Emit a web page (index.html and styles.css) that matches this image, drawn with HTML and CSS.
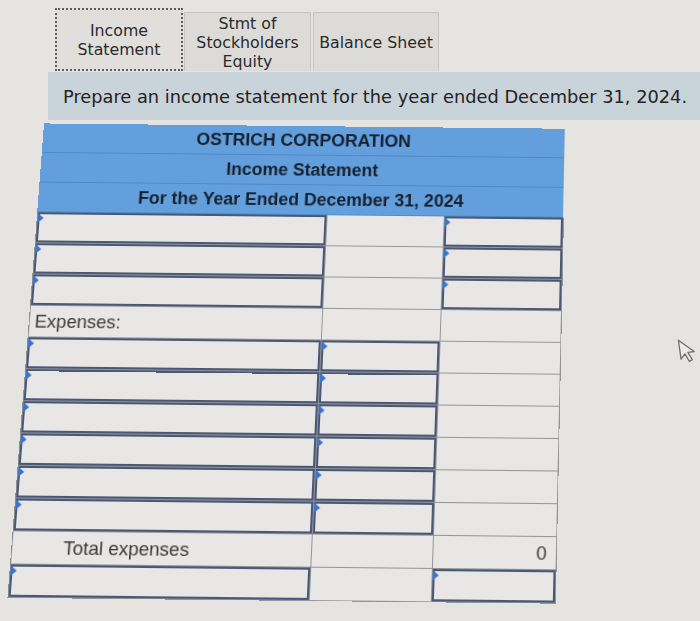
FILE: index.html
```html
<!DOCTYPE html>
<html>
<head>
<meta charset="utf-8">
<link rel="stylesheet" href="styles.css">
</head>
<body>
<div class="page">
  <div class="tabs">
    <div class="tab tab-active">Income<br>Statement</div>
    <div class="tab tab-mid">Stmt of<br>Stockholders<br>Equity</div>
    <div class="tab tab-last">Balance Sheet</div>
  </div>
  <div class="prompt">Prepare an income statement for the year ended December 31, 2024.</div>
  <div class="sheet">
    <div class="hdr">OSTRICH CORPORATION</div>
    <div class="hdr">Income Statement</div>
    <div class="hdr">For the Year Ended December 31, 2024</div>
    <div class="grid">
      <div class="c inp"></div><div class="c"></div><div class="c inp"></div>
      <div class="c inp"></div><div class="c"></div><div class="c inp"></div>
      <div class="c inp"></div><div class="c"></div><div class="c inp"></div>
      <div class="c lbl">Expenses:</div><div class="c"></div><div class="c"></div>
      <div class="c inp"></div><div class="c inp"></div><div class="c"></div>
      <div class="c inp"></div><div class="c inp"></div><div class="c"></div>
      <div class="c inp"></div><div class="c inp"></div><div class="c"></div>
      <div class="c inp"></div><div class="c inp"></div><div class="c"></div>
      <div class="c inp"></div><div class="c inp"></div><div class="c"></div>
      <div class="c inp"></div><div class="c inp"></div><div class="c"></div>
      <div class="c lbl lbl-indent">Total expenses</div><div class="c"></div><div class="c num">0</div>
      <div class="c inp"></div><div class="c"></div><div class="c inp"></div>
    </div>
  </div>
  <svg class="cursor" width="20" height="28" viewBox="0 0 20 28">
    <path d="M2 2 L2 21 L6.5 16.5 L10 24.5 L13 23.2 L9.6 15.4 L16 15.4 Z" fill="#ecebe9" stroke="#6f6f6f" stroke-width="1.3" stroke-linejoin="round"/>
  </svg>
</div>
</body>
</html>
```
FILE: styles.css
```css
html, body {
  margin: 0;
  padding: 0;
}
body {
  background: #e6e4e1;
  width: 700px;
  height: 621px;
  overflow: hidden;
}
.page {
  position: relative;
  width: 700px;
  height: 621px;
}
.tabs {
  display: flex;
  align-items: flex-end;
  padding: 8px 0 0 55px;
  height: 71px;
  box-sizing: border-box;
}
.tab {
  font-family: "DejaVu Sans", Verdana, sans-serif;
  font-size: 15.8px;
  line-height: 19px;
  color: #2a2a2a;
  text-align: center;
  display: flex;
  align-items: center;
  justify-content: center;
  box-sizing: border-box;
  height: 59px;
  background: #dddbd8;
  border: 1px solid #c6c4c1;
  border-bottom: none;
}
.tab-active {
  width: 128px;
  height: 63px;
  background: #e1dfdc;
  border: 2px dotted #5c5c66;
}
.tab-mid {
  width: 127px;
  margin-left: 1px;
}
.tab-last {
  width: 126px;
  margin-left: 2px;
}
.prompt {
  margin: 1px 0 0 48px;
  height: 48px;
  background: #c9d3da;
  font-family: "DejaVu Sans", Verdana, sans-serif;
  font-size: 17.8px;
  color: #232323;
  line-height: 50px;
  padding-left: 15px;
  white-space: nowrap;
}
.sheet {
  margin: -1px 0 0 26px;
  width: 534px;
  transform-origin: 50% 50%;
  transform: perspective(1000px) rotateX(6deg) skewX(-2.2deg) rotate(0.6deg);
  font-family: "Liberation Sans", Arial, sans-serif;
}
.hdr {
  height: 31px;
  background: #629fdc;
  border-bottom: 1px solid #5089c4;
  box-sizing: border-box;
  display: flex;
  align-items: center;
  justify-content: center;
  font-weight: bold;
  font-size: 18px;
  color: #17202e;
}
.grid {
  display: grid;
  grid-template-columns: 294px 119px 121px;
  grid-auto-rows: 32px;
  border-left: 1px solid #8f8f8f;
}
.c {
  position: relative;
  background: #e8e7e5;
  border-right: 1px solid #959595;
  border-bottom: 1px solid #959595;
}
.inp {
  box-shadow: inset 0 0 0 2px #4a5877;
}
.inp::before {
  content: "";
  position: absolute;
  left: 0;
  top: 1px;
  border-top: 5px solid transparent;
  border-bottom: 5px solid transparent;
  border-left: 6px solid #3a74cc;
}
.lbl {
  font-size: 18.5px;
  color: #3a3a3a;
  display: flex;
  align-items: center;
  padding-left: 5px;
}
.lbl-indent {
  padding-left: 50px;
}
.num {
  font-size: 18.5px;
  color: #3a3a3a;
  display: flex;
  align-items: center;
  justify-content: flex-end;
  padding-right: 9px;
}
.cursor {
  position: absolute;
  left: 678px;
  top: 337px;
  transform: rotate(-8deg);
}
```
